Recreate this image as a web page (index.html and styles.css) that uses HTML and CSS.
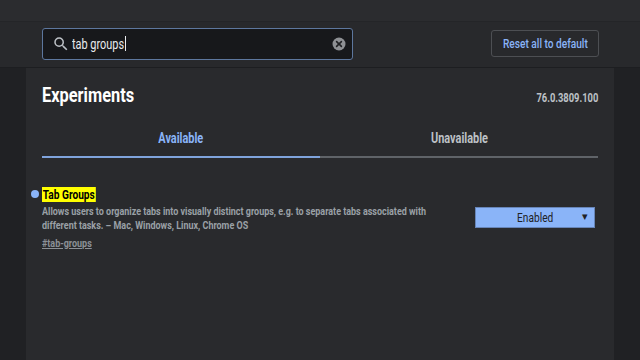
FILE: index.html
```html
<!DOCTYPE html>
<html lang="en">
<head>
  <meta charset="UTF-8">
  <meta name="viewport" content="width=device-width, initial-scale=1.0">
  <title>Experiments</title>
  <link rel="stylesheet" href="styles.css">
</head>
<body>

  <div class="topbar"></div>
  <header class="header">
    <div class="search">
      <svg class="search-icon" viewBox="0 0 24 24" width="18" height="18">
        <path fill="#bdc1c6" d="M15.5 14h-.79l-.28-.27A6.471 6.471 0 0 0 16 9.5 6.5 6.5 0 1 0 9.5 16c1.610 0 3.090-.59 4.230-1.570l.27.28v.79l5 4.990L20.490 19l-4.990-5zm-6 0C7.010 14 5 11.990 5 9.500S7.010 5 9.500 5 14 7.010 14 9.500 11.990 14 9.500 14z"/>
      </svg>
      <span class="search-text sq">tab groups</span><span class="caret"></span>
      <svg class="clear-icon" viewBox="0 0 14 14" width="14" height="14">
        <circle cx="7" cy="7" r="6.5" fill="#8e9094"/>
        <path d="M4.6 4.6l4.8 4.8M9.4 4.6l-4.8 4.8" stroke="#202124" stroke-width="1.6" stroke-linecap="round"/>
      </svg>
    </div>
    <button class="reset"><span class="sq-c">Reset all to default</span></button>
  </header>

  <div class="page">
    <main class="panel">
      <div class="title-row">
        <h1 class="sq">Experiments</h1>
        <span class="version sq-r">76.0.3809.100</span>
      </div>

      <div class="tabs">
        <div class="tab active"><span class="sq-c">Available</span></div>
        <div class="tab"><span class="sq-c">Unavailable</span></div>
      </div>

      <div class="experiment">
        <span class="dot"></span>
        <div class="exp-body">
          <div class="exp-text">
            <div class="exp-name"><mark>Tab Groups</mark></div>
            <p class="exp-desc">Allows users to organize tabs into visually distinct groups, e.g. to separate tabs associated with<br>different tasks. – Mac, Windows, Linux, Chrome OS</p>
            <a class="exp-link" href="#tab-groups">#tab-groups</a>
          </div>
        </div>
        <div class="select"><span class="sq-c">Enabled</span><span class="arrow">▾</span></div>
      </div>
    </main>
  </div>

</body>
</html>
```

FILE: styles.css
```css
body {
  margin: 0;
  height: 360px;
  overflow: hidden;
  font-family: Roboto, "Liberation Sans", sans-serif;
  background: #202124;
  display: flex;
  flex-direction: column;
}

/* text in the shot is narrow, squeeze it */
.sq, .sq-c, .sq-r {
  display: inline-block;
  transform: scaleX(.78);
  transform-origin: left center;
  white-space: nowrap;
}
.sq-c { transform-origin: center; }
.sq-r { transform-origin: right center; }

.topbar {
  height: 21px;
  background: #2b2c2f;
  border-bottom: 1px solid #242528;
}
.header {
  height: 45px;
  background: #28292c;
  border-bottom: 1px solid #1d1e21;
  display: flex;
  align-items: center;
  justify-content: space-between;
  padding: 0 41px 0 42px;
}

.search {
  box-sizing: border-box;
  width: 311px;
  height: 32px;
  margin-top: -2px;
  background: #17181b;
  border: 1px solid #5d779e;
  border-radius: 3px;
  display: flex;
  align-items: center;
  padding: 0 6px 0 9px;
}
.search-icon { flex: none; }
.search-text {
  color: #e8eaed;
  font-size: 14px;
  margin-left: 2px;
}
.caret {
  width: 1px;
  height: 15px;
  background: #e8eaed;
  margin-left: -14px;
}
.clear-icon {
  margin-left: auto;
}

.reset {
  box-sizing: border-box;
  width: 108px;
  height: 27px;
  margin-top: -2px;
  background: transparent;
  border: 1px solid #4d4f53;
  border-radius: 3px;
  color: #8ab4f8;
  font-family: inherit;
  font-size: 13px;
  font-weight: 500;
  padding: 0;
  display: flex;
  align-items: center;
  justify-content: center;
}

.page {
  flex: 1;
  display: flex;
  padding: 0 26px;
}
.panel {
  flex: 1;
  min-width: 0;
  background: #292a2d;
  padding: 0 16px;
}

.title-row {
  display: flex;
  align-items: baseline;
  justify-content: space-between;
  margin-top: 13px;
}
h1 {
  margin: 0;
  font-size: 21px;
  font-weight: 700;
  color: #ffffff;
}
.version {
  font-size: 12px;
  font-weight: 700;
  color: #bdc1c6;
  margin-top: 10px;
}

.tabs {
  display: flex;
  margin-top: 23px;
  border-bottom: 2px solid #5f6368;
}
.tab {
  flex: 1;
  text-align: center;
  font-size: 14px;
  font-weight: 700;
  color: #bdc1c6;
  padding-bottom: 10px;
  margin-bottom: -2px;
  border-bottom: 2px solid transparent;
}
.tab.active {
  color: #8ab4f8;
  border-bottom-color: #7fa3dc;
}

.experiment {
  display: flex;
  align-items: flex-start;
  margin-top: 29px;
  margin-left: -11px;
}
.dot {
  flex: none;
  width: 8px;
  height: 8px;
  border-radius: 50%;
  background: #8ab4f8;
  margin-top: 3px;
  margin-right: 3px;
}
.exp-body {
  flex: 1;
  min-width: 0;
}
.exp-text {
  transform: scaleX(.78);
  transform-origin: left top;
  width: 520px;
}
.exp-name {
  font-size: 13px;
  font-weight: 700;
  line-height: 15px;
}
mark {
  background: #ffff00;
  color: #000000;
  padding: 0 1px;
}
.exp-desc {
  margin: 2px 0 0;
  font-size: 11.5px;
  font-weight: 700;
  line-height: 14px;
  color: #9aa0a6;
  white-space: nowrap;
}
.exp-link {
  display: inline-block;
  margin-top: 2px;
  font-size: 11.5px;
  font-weight: 700;
  color: #8c9096;
}

.select {
  flex: none;
  box-sizing: border-box;
  width: 120px;
  height: 21px;
  margin-top: 20px;
  margin-right: 3px;
  background: #8ab4f8;
  border: 1px solid #6785b8;
  display: flex;
  align-items: center;
  justify-content: center;
  position: relative;
  font-size: 13px;
  color: #202124;
}
.arrow {
  position: absolute;
  right: 6px;
  top: 2px;
  font-size: 11px;
}
```
